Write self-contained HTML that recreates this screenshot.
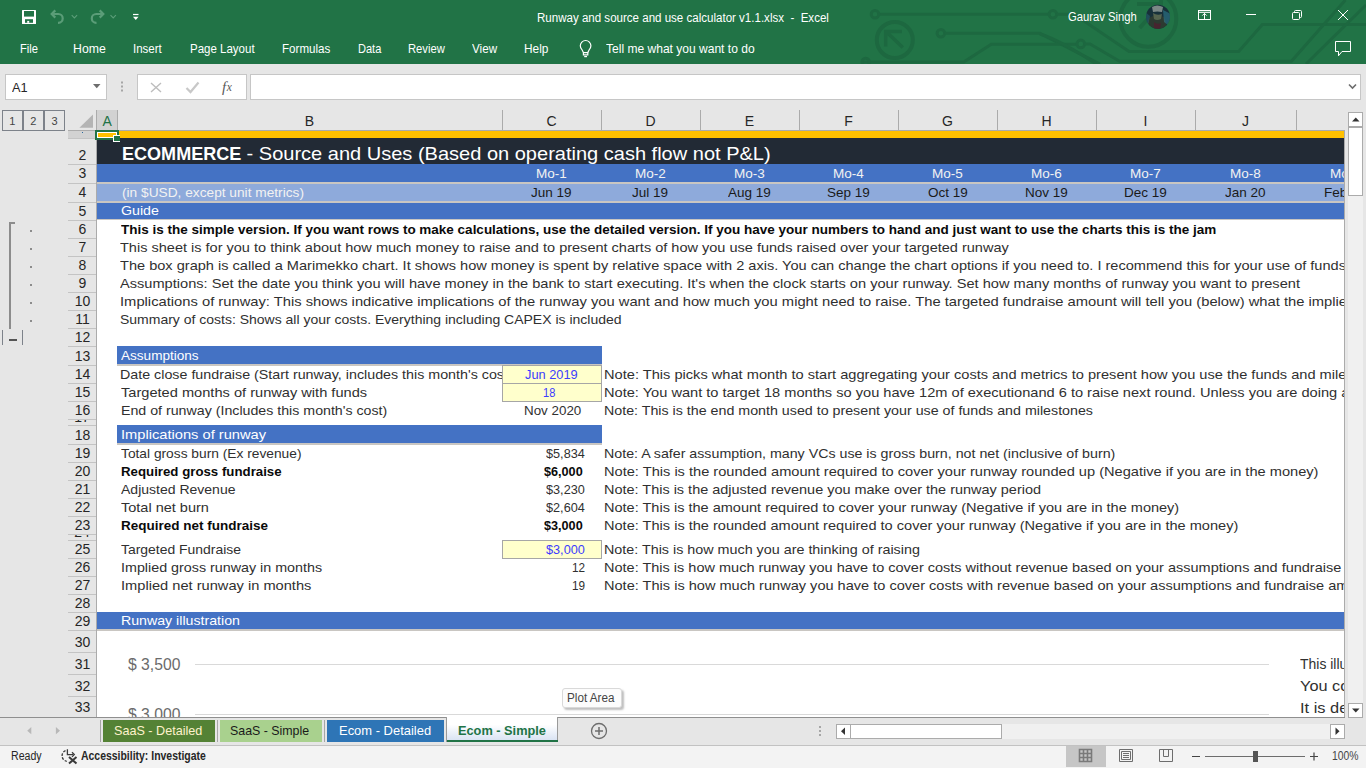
<!DOCTYPE html>
<html><head><meta charset="utf-8"><title>Excel</title>
<style>
html,body{margin:0;padding:0;}
body{width:1366px;height:768px;position:relative;overflow:hidden;background:#e6e6e6;font-family:'Liberation Sans', sans-serif;}
.r{position:absolute;}
.t{position:absolute;white-space:pre;transform-origin:0 0;}
.u{position:absolute;white-space:pre;font-family:'Liberation Sans', sans-serif;}
</style></head><body>
<div class="r" style="left:0;top:0;width:1366px;height:64px;background:#217346"></div>
<svg class="r" style="left:0;top:0" width="1366" height="64" viewBox="0 0 1366 64">
<g fill="none" stroke="#1d6840" stroke-width="3" stroke-linecap="butt">
<path d="M879 14.3 H1049"/>
<circle cx="875" cy="14.3" r="3.8"/>
<circle cx="1052.9" cy="14.3" r="3.8"/>
<path d="M1056.7 14.3 H1074 L1129 51.4 H1238.7 L1262.4 24.6 H1366"/>
<circle cx="894.8" cy="40" r="18" stroke-width="4"/>
<path d="M902.8 47.6 L886.5 31.9 M885.7 46.6 V31.4 H901.9" stroke-width="3.5"/>
<circle cx="940.9" cy="33.3" r="3.8"/>
<path d="M944.7 33.3 H1039.8 L1100 64"/>
<path d="M862 62 H963.7 L991.3 44.2 H1077"/>
<circle cx="1080.8" cy="43.9" r="3.8"/>
<path d="M1084.6 43.9 H1090 L1119.6 61.3 H1291.4 L1345.4 0"/>
<path d="M1306 64 L1366 5"/>
<circle cx="865.7" cy="62" r="3.8"/>
<path d="M1040 34 Q1060 40 1096 64"/>
<circle cx="1148.3" cy="18.7" r="28" stroke-width="4"/>
<path d="M1139.6 28 L1159.5 5.9 M1137 4 H1161 V-20" stroke-width="4"/>
</g>
<!-- save icon -->
<rect x="22" y="10" width="14" height="14" fill="#fff" rx="0.5"/>
<rect x="24" y="11" width="10" height="5.6" fill="#217346"/>
<rect x="25" y="19.2" width="8" height="3.6" fill="#217346"/>
<rect x="27.2" y="20.9" width="2" height="1.9" fill="#fff"/>
<!-- undo / redo -->
<g fill="none" stroke="#5b9d78" stroke-width="2.2">
<path d="M51.5 14 H58.3 A4.4 4.4 0 0 1 58.3 22.8 H58"/>
<path d="M55.3 10.4 L51.7 14 L55.3 17.6"/>
<path d="M103.5 14 H96.2 A4.4 4.4 0 0 0 96.2 22.8 H96.5"/>
<path d="M99.7 10.4 L103.3 14 L99.7 17.6"/>
</g>
<g fill="none" stroke="#5b9d78" stroke-width="1.1">
<path d="M71.7 15.2 L74.4 17.9 L77.1 15.2"/>
<path d="M110.5 15.2 L113.2 17.9 L115.9 15.2"/>
</g>
<!-- customize qat -->
<rect x="133" y="13.9" width="5.5" height="1.2" fill="#fff"/>
<path d="M133 16.8 H138.5 L135.75 20.1 Z" fill="#fff"/>
<!-- avatar -->
<defs><clipPath id="avc"><circle cx="1158" cy="16.7" r="12"/></clipPath></defs>
<circle cx="1158" cy="16.7" r="12" fill="#17303a"/>
<g clip-path="url(#avc)">
<path d="M1146 30 L1149 18 Q1156 13 1164 17 L1168 30 Z" fill="#2c3a31"/>
<path d="M1152 7 Q1157 4 1163 7 L1162 12 Q1157 11 1153 12 Z" fill="#8d9894" opacity="0.85"/>
<path d="M1153 13 Q1157 16 1162 14 L1161 19 Q1157 21 1154 19 Z" fill="#56644f"/>
<path d="M1163 10 L1171 14 L1169 26 L1164 22 Z" fill="#3aa0b8" opacity="0.4"/>
<path d="M1145 12 L1150 16 L1148 26 L1144 22 Z" fill="#3aa0b8" opacity="0.25"/>
<path d="M1154 22 Q1157 25 1161 23 L1160 29 L1154 29 Z" fill="#4a2230" opacity="0.9"/>
</g>
<!-- ribbon display options -->
<g fill="none" stroke="#fff" stroke-width="1">
<rect x="1198.5" y="10.5" width="12" height="9"/>
<path d="M1198.5 12.3 H1210.5" stroke-width="1.1"/>
<path d="M1204.5 19 V13.2 M1202.3 15.6 L1204.5 13.4 L1206.7 15.6"/>
<path d="M1246 14.5 H1256"/>
<rect x="1292.5" y="12.5" width="7" height="7" rx="1"/>
<path d="M1294.5 12.5 V11.5 Q1294.5 10.5 1295.5 10.5 H1300.5 Q1301.5 10.5 1301.5 11.5 V16.5 Q1301.5 17.5 1300.5 17.5 H1299.5"/>
<path d="M1338 10 L1348 20 M1348 10 L1338 20"/>
<path d="M1335.5 41.5 H1350.5 V51.5 H1342 L1338.5 55.8 V51.5 H1335.5 Z"/>
</g>
<!-- lightbulb -->
<g fill="none" stroke="#fff" stroke-width="1.2">
<path d="M583.4 52.6 L581.9 49.6 A5.3 5.3 0 1 1 589.3 49.6 L587.8 52.6 Z"/>
<path d="M583.4 52.6 V54.9 H587.8 V52.6"/>
<path d="M584.2 56.6 H587"/>
</g>
</svg>
<div class="r" style="left:5px;top:74px;width:102px;height:26px;box-sizing:border-box;border:1px solid #c6c6c6;background:#fff"></div>
<div class="r" style="left:137px;top:74px;width:110px;height:26px;box-sizing:border-box;border:1px solid #c6c6c6;background:#fff"></div>
<div class="r" style="left:250px;top:74px;width:1111px;height:26px;box-sizing:border-box;border:1px solid #c6c6c6;background:#fff"></div>
<svg class="r" style="left:0;top:64px" width="1366" height="46" viewBox="0 64 1366 46">
<path d="M93 84 H100.5 L96.75 88.2 Z" fill="#6d6d6d"/>
<rect x="121" y="81.5" width="2" height="2" fill="#a6a6a6"/>
<rect x="121" y="85.5" width="2" height="2" fill="#a6a6a6"/>
<rect x="121" y="89.5" width="2" height="2" fill="#a6a6a6"/>
<path d="M151 83 L161 92 M161 83 L151 92" stroke="#bdbdbd" stroke-width="1.4" fill="none"/>
<path d="M186.5 88 L190.5 92 L198.5 82.5" stroke="#c8c8c8" stroke-width="2.2" fill="none"/>
<text x="222" y="91.5" font-family="Liberation Serif" font-style="italic" font-size="15" fill="#5a5a5a">f</text>
<text x="226.8" y="90.5" font-family="Liberation Serif" font-style="italic" font-size="11.5" fill="#5a5a5a">x</text>
<path d="M1349 84.5 L1352.5 88 L1356 84.5" stroke="#6d6d6d" stroke-width="1.6" fill="none"/>
</svg>
<div class="r" style="left:2px;top:110px;width:21px;height:21px;box-sizing:border-box;border:1px solid #7d828a"></div>
<div class="r" style="left:23px;top:110px;width:21px;height:21px;box-sizing:border-box;border:1px solid #7d828a"></div>
<div class="r" style="left:44px;top:110px;width:21px;height:21px;box-sizing:border-box;border:1px solid #7d828a"></div>
<svg class="r" style="left:0;top:0" width="97" height="140"><path d="M93 114.6 V127.8 H79.4 Z" fill="#b4b4b4"/></svg>
<div class="r" style="left:97px;top:110px;width:1247px;height:20px;background:#e6e6e6"></div>
<div class="r" style="left:96px;top:110px;width:22px;height:20px;background:#d2d2d2"></div>
<div class="r" style="left:68px;top:130px;width:1276px;height:1px;background:#ababab"></div>
<div class="r" style="left:96px;top:110px;width:1px;height:20px;background:#ababab"></div>
<div class="r" style="left:117px;top:110px;width:1px;height:20px;background:#ababab"></div>
<div class="r" style="left:502px;top:110px;width:1px;height:20px;background:#ababab"></div>
<div class="r" style="left:601px;top:110px;width:1px;height:20px;background:#ababab"></div>
<div class="r" style="left:700px;top:110px;width:1px;height:20px;background:#ababab"></div>
<div class="r" style="left:799px;top:110px;width:1px;height:20px;background:#ababab"></div>
<div class="r" style="left:898px;top:110px;width:1px;height:20px;background:#ababab"></div>
<div class="r" style="left:997px;top:110px;width:1px;height:20px;background:#ababab"></div>
<div class="r" style="left:1096px;top:110px;width:1px;height:20px;background:#ababab"></div>
<div class="r" style="left:1195px;top:110px;width:1px;height:20px;background:#ababab"></div>
<div class="r" style="left:1296px;top:110px;width:1px;height:20px;background:#ababab"></div>
<div class="r" style="left:96px;top:130px;width:1px;height:587px;background:#ababab"></div>
<div class="r" style="left:68px;top:131px;width:28px;height:7px;background:#d2d2d2"></div>
<div class="r" style="left:81.5px;top:132px;width:1.2px;height:1px;background:#2a6aa0"></div>
<div class="r" style="left:68px;top:138px;width:28px;height:1px;background:#c4c4c4"></div>
<div class="r" style="left:68px;top:164px;width:28px;height:1px;background:#c4c4c4"></div>
<div class="r" style="left:68px;top:183px;width:28px;height:1px;background:#c4c4c4"></div>
<div class="r" style="left:68px;top:202px;width:28px;height:1px;background:#c4c4c4"></div>
<div class="r" style="left:68px;top:220px;width:28px;height:1px;background:#c4c4c4"></div>
<div class="r" style="left:68px;top:238px;width:28px;height:1px;background:#c4c4c4"></div>
<div class="r" style="left:68px;top:256px;width:28px;height:1px;background:#c4c4c4"></div>
<div class="r" style="left:68px;top:274px;width:28px;height:1px;background:#c4c4c4"></div>
<div class="r" style="left:68px;top:292px;width:28px;height:1px;background:#c4c4c4"></div>
<div class="r" style="left:68px;top:310px;width:28px;height:1px;background:#c4c4c4"></div>
<div class="r" style="left:68px;top:328px;width:28px;height:1px;background:#c4c4c4"></div>
<div class="r" style="left:68px;top:346px;width:28px;height:1px;background:#c4c4c4"></div>
<div class="r" style="left:68px;top:365px;width:28px;height:1px;background:#c4c4c4"></div>
<div class="r" style="left:68px;top:383px;width:28px;height:1px;background:#c4c4c4"></div>
<div class="r" style="left:68px;top:401px;width:28px;height:1px;background:#c4c4c4"></div>
<div class="r" style="left:68px;top:419px;width:28px;height:1px;background:#c4c4c4"></div>
<div class="r" style="left:68px;top:425px;width:28px;height:1px;background:#c4c4c4"></div>
<div class="r" style="left:68px;top:444px;width:28px;height:1px;background:#c4c4c4"></div>
<div class="r" style="left:68px;top:462px;width:28px;height:1px;background:#c4c4c4"></div>
<div class="r" style="left:68px;top:480px;width:28px;height:1px;background:#c4c4c4"></div>
<div class="r" style="left:68px;top:498px;width:28px;height:1px;background:#c4c4c4"></div>
<div class="r" style="left:68px;top:516px;width:28px;height:1px;background:#c4c4c4"></div>
<div class="r" style="left:68px;top:534px;width:28px;height:1px;background:#c4c4c4"></div>
<div class="r" style="left:68px;top:540px;width:28px;height:1px;background:#c4c4c4"></div>
<div class="r" style="left:68px;top:558px;width:28px;height:1px;background:#c4c4c4"></div>
<div class="r" style="left:68px;top:576px;width:28px;height:1px;background:#c4c4c4"></div>
<div class="r" style="left:68px;top:594px;width:28px;height:1px;background:#c4c4c4"></div>
<div class="r" style="left:68px;top:612px;width:28px;height:1px;background:#c4c4c4"></div>
<div class="r" style="left:68px;top:630px;width:28px;height:1px;background:#c4c4c4"></div>
<div class="r" style="left:68px;top:652px;width:28px;height:1px;background:#c4c4c4"></div>
<div class="r" style="left:68px;top:674px;width:28px;height:1px;background:#c4c4c4"></div>
<div class="r" style="left:68px;top:696px;width:28px;height:1px;background:#c4c4c4"></div>
<div class="r" style="left:9px;top:222px;width:2px;height:107px;background:#8c8c8c"></div>
<div class="r" style="left:9px;top:222px;width:6px;height:2px;background:#8c8c8c"></div>
<div class="r" style="left:30px;top:229.5px;width:2px;height:2px;background:#8c8c8c"></div>
<div class="r" style="left:30px;top:247.5px;width:2px;height:2px;background:#8c8c8c"></div>
<div class="r" style="left:30px;top:265.5px;width:2px;height:2px;background:#8c8c8c"></div>
<div class="r" style="left:30px;top:283.5px;width:2px;height:2px;background:#8c8c8c"></div>
<div class="r" style="left:30px;top:301.5px;width:2px;height:2px;background:#8c8c8c"></div>
<div class="r" style="left:30px;top:319.5px;width:2px;height:2px;background:#8c8c8c"></div>
<div class="r" style="left:2px;top:330px;width:1px;height:15px;background:#7d828a"></div>
<div class="r" style="left:22px;top:330px;width:1px;height:15px;background:#7d828a"></div>
<div class="r" style="left:9px;top:339px;width:8px;height:2px;background:#555"></div>
<div class="r" style="left:68px;top:420px;width:28px;height:5px;overflow:hidden"><div class="u" style="left:0;top:-10px;width:28px;text-align:center;font-size:14px;line-height:14px;color:#262626">17</div></div>
<div class="r" style="left:68px;top:535px;width:28px;height:5px;overflow:hidden"><div class="u" style="left:0;top:-10px;width:28px;text-align:center;font-size:14px;line-height:14px;color:#262626">24</div></div>
<div class="r" style="left:0;top:0;width:1344px;height:717px;overflow:hidden">
<div class="r" style="left:0;top:131px;width:1344px;height:586px;overflow:hidden"><div class="r" style="left:0;top:-131px;width:1344px;height:768px">
<div class="r" style="left:97px;top:131px;width:1247px;height:586px;background:#ffffff;"></div>
<div class="r" style="left:97px;top:131px;width:1247px;height:7px;background:#ffc000;"></div>
<div class="r" style="left:97px;top:138px;width:1247px;height:26px;background:#222a35;"></div>
<div class="r" style="left:97px;top:164px;width:1247px;height:18px;background:#4472c4;"></div>
<div class="r" style="left:97px;top:182px;width:1247px;height:2px;background:#c9c6c2;"></div>
<div class="r" style="left:97px;top:184px;width:1247px;height:17px;background:#8eaadb;"></div>
<div class="r" style="left:97px;top:201px;width:1247px;height:2px;background:#c9c6c2;"></div>
<div class="r" style="left:97px;top:203px;width:1247px;height:16px;background:#4472c4;"></div>
<div class="r" style="left:97px;top:219px;width:1247px;height:1px;background:#c9c6c2;"></div>
<div class="r" style="left:117px;top:346px;width:485px;height:18px;background:#4472c4;"></div>
<div class="r" style="left:117px;top:364px;width:485px;height:2px;background:#c9c6c2;"></div>
<div class="r" style="left:117px;top:425px;width:485px;height:18px;background:#4472c4;"></div>
<div class="r" style="left:117px;top:443px;width:485px;height:2px;background:#c9c6c2;"></div>
<div class="r" style="left:97px;top:612px;width:1247px;height:17px;background:#4472c4;"></div>
<div class="r" style="left:97px;top:629px;width:1247px;height:2px;background:#c9c6c2;"></div>
<div class="r" style="left:502px;top:365px;width:100px;height:37px;background:#ffffcc;box-sizing:border-box;border:1px solid #a6a6a6"></div>
<div class="r" style="left:502px;top:383px;width:100px;height:1px;background:#a6a6a6;"></div>
<div class="r" style="left:502px;top:540px;width:100px;height:19px;background:#ffffcc;box-sizing:border-box;border:1px solid #a6a6a6"></div>
<div class="r" style="left:195px;top:664px;width:1074px;height:1px;background:#d9d9d9;"></div>
<div class="r" style="left:195px;top:714px;width:1074px;height:1px;background:#d9d9d9;"></div>
<div class="t" style="left:122.00px;top:143.92px;font-size:19px;line-height:19px;font-weight:bold;color:#ffffff;transform:scaleX(0.9497)">ECOMMERCE</div>
<div class="t" style="left:241.30px;top:143.92px;font-size:19px;line-height:19px;font-weight:normal;color:#ffffff;transform:scaleX(1.0536)"> - Source and Uses (Based on operating cash flow not P&amp;L)</div>
<div class="t" style="left:536.10px;top:167.00px;font-size:13px;line-height:13px;font-weight:normal;color:#f2f2f2;transform:scaleX(1.0400)">Mo-1</div>
<div class="t" style="left:531.20px;top:186.00px;font-size:13px;line-height:13px;font-weight:normal;color:#1a1a1a;transform:scaleX(1.0400)">Jun 19</div>
<div class="t" style="left:635.10px;top:167.00px;font-size:13px;line-height:13px;font-weight:normal;color:#f2f2f2;transform:scaleX(1.0400)">Mo-2</div>
<div class="t" style="left:632.45px;top:186.00px;font-size:13px;line-height:13px;font-weight:normal;color:#1a1a1a;transform:scaleX(1.0400)">Jul 19</div>
<div class="t" style="left:734.10px;top:167.00px;font-size:13px;line-height:13px;font-weight:normal;color:#f2f2f2;transform:scaleX(1.0400)">Mo-3</div>
<div class="t" style="left:728.07px;top:186.00px;font-size:13px;line-height:13px;font-weight:normal;color:#1a1a1a;transform:scaleX(1.0400)">Aug 19</div>
<div class="t" style="left:833.10px;top:167.00px;font-size:13px;line-height:13px;font-weight:normal;color:#f2f2f2;transform:scaleX(1.0400)">Mo-4</div>
<div class="t" style="left:827.07px;top:186.00px;font-size:13px;line-height:13px;font-weight:normal;color:#1a1a1a;transform:scaleX(1.0400)">Sep 19</div>
<div class="t" style="left:932.10px;top:167.00px;font-size:13px;line-height:13px;font-weight:normal;color:#f2f2f2;transform:scaleX(1.0400)">Mo-5</div>
<div class="t" style="left:927.59px;top:186.00px;font-size:13px;line-height:13px;font-weight:normal;color:#1a1a1a;transform:scaleX(1.0400)">Oct 19</div>
<div class="t" style="left:1031.10px;top:167.00px;font-size:13px;line-height:13px;font-weight:normal;color:#f2f2f2;transform:scaleX(1.0400)">Mo-6</div>
<div class="t" style="left:1025.07px;top:186.00px;font-size:13px;line-height:13px;font-weight:normal;color:#1a1a1a;transform:scaleX(1.0400)">Nov 19</div>
<div class="t" style="left:1130.10px;top:167.00px;font-size:13px;line-height:13px;font-weight:normal;color:#f2f2f2;transform:scaleX(1.0400)">Mo-7</div>
<div class="t" style="left:1124.07px;top:186.00px;font-size:13px;line-height:13px;font-weight:normal;color:#1a1a1a;transform:scaleX(1.0400)">Dec 19</div>
<div class="t" style="left:1230.10px;top:167.00px;font-size:13px;line-height:13px;font-weight:normal;color:#f2f2f2;transform:scaleX(1.0400)">Mo-8</div>
<div class="t" style="left:1225.20px;top:186.00px;font-size:13px;line-height:13px;font-weight:normal;color:#1a1a1a;transform:scaleX(1.0400)">Jan 20</div>
<div class="t" style="left:1330.10px;top:167.00px;font-size:13px;line-height:13px;font-weight:normal;color:#f2f2f2;transform:scaleX(1.0400)">Mo-9</div>
<div class="t" style="left:1324.45px;top:186.00px;font-size:13px;line-height:13px;font-weight:normal;color:#1a1a1a;transform:scaleX(1.0400)">Feb 20</div>
<div class="t" style="left:122.00px;top:186.00px;font-size:13px;line-height:13px;font-weight:normal;color:#f2f2f2;transform:scaleX(1.0540)">(in $USD, except unit metrics)</div>
<div class="t" style="left:120.80px;top:203.50px;font-size:13px;line-height:13px;font-weight:normal;color:#ffffff;transform:scaleX(1.0921)">Guide</div>
<div class="t" style="left:120.50px;top:223.00px;font-size:13px;line-height:13px;font-weight:bold;color:#0a0a0a;transform:scaleX(1.0378)">This is the simple version. If you want rows to make calculations, use the detailed version. If you have your numbers to hand and just want to use the charts this is the jam</div>
<div class="t" style="left:120.00px;top:241.00px;font-size:13px;line-height:13px;font-weight:normal;color:#303030;transform:scaleX(1.1171)">This sheet is for you to think about how much money to raise and to present charts of how you use funds raised over your targeted runway</div>
<div class="t" style="left:120.00px;top:259.00px;font-size:13px;line-height:13px;font-weight:normal;color:#303030;transform:scaleX(1.1206)">The box graph is called a Marimekko chart. It shows how money is spent by relative space with 2 axis. You can change the chart options if you need to. I recommend this for your use of funds</div>
<div class="t" style="left:120.00px;top:277.00px;font-size:13px;line-height:13px;font-weight:normal;color:#303030;transform:scaleX(1.1230)">Assumptions: Set the date you think you will have money in the bank to start executing. It&#x27;s when the clock starts on your runway. Set how many months of runway you want to present</div>
<div class="t" style="left:120.00px;top:295.00px;font-size:13px;line-height:13px;font-weight:normal;color:#303030;transform:scaleX(1.1341)">Implications of runway: This shows indicative implications of the runway you want and how much you might need to raise. The targeted fundraise amount will tell you (below) what the implie</div>
<div class="t" style="left:120.00px;top:313.00px;font-size:13px;line-height:13px;font-weight:normal;color:#303030;transform:scaleX(1.0761)">Summary of costs: Shows all your costs. Everything including CAPEX is included</div>
<div class="t" style="left:121.20px;top:348.50px;font-size:13px;line-height:13px;font-weight:normal;color:#ffffff;transform:scaleX(1.0427)">Assumptions</div>
<div style="position:absolute;left:0;top:0;width:502px;height:768px;overflow:hidden"><div class="t" style="left:120.00px;top:368.00px;font-size:13px;line-height:13px;font-weight:normal;color:#303030;transform:scaleX(1.0978)">Date close fundraise (Start runway, includes this month&#x27;s cos</div></div>
<div class="t" style="left:525.15px;top:368.00px;font-size:13px;line-height:13px;font-weight:normal;color:#3c3cff;transform:scaleX(0.9850)">Jun 2019</div>
<div class="t" style="left:603.60px;top:368.00px;font-size:13px;line-height:13px;font-weight:normal;color:#303030;transform:scaleX(1.1245)">Note: This picks what month to start aggregating your costs and metrics to present how you use the funds and mile</div>
<div class="t" style="left:120.70px;top:386.00px;font-size:13px;line-height:13px;font-weight:normal;color:#303030;transform:scaleX(1.1240)">Targeted months of runway with funds</div>
<div class="t" style="left:542.85px;top:386.00px;font-size:13px;line-height:13px;font-weight:normal;color:#3c3cff;transform:scaleX(0.8501)">18</div>
<div class="t" style="left:603.60px;top:386.00px;font-size:13px;line-height:13px;font-weight:normal;color:#303030;transform:scaleX(1.1235)">Note: You want to target 18 months so you have 12m of executionand 6 to raise next round. Unless you are doing a</div>
<div class="t" style="left:120.70px;top:404.00px;font-size:13px;line-height:13px;font-weight:normal;color:#303030;transform:scaleX(1.0922)">End of runway (Includes this month&#x27;s cost)</div>
<div class="t" style="left:523.95px;top:404.00px;font-size:13px;line-height:13px;font-weight:normal;color:#303030;transform:scaleX(1.0295)">Nov 2020</div>
<div class="t" style="left:603.60px;top:404.00px;font-size:13px;line-height:13px;font-weight:normal;color:#303030;transform:scaleX(1.0955)">Note: This is the end month used to present your use of funds and milestones</div>
<div class="t" style="left:120.70px;top:427.50px;font-size:13px;line-height:13px;font-weight:normal;color:#ffffff;transform:scaleX(1.1281)">Implications of runway</div>
<div class="t" style="left:120.70px;top:447.00px;font-size:13px;line-height:13px;font-weight:normal;color:#303030;transform:scaleX(1.0585)">Total gross burn (Ex revenue)</div>
<div class="t" style="left:546.20px;top:447.00px;font-size:13px;line-height:13px;font-weight:normal;color:#303030;transform:scaleX(0.9757)">$5,834</div>
<div class="t" style="left:603.60px;top:447.00px;font-size:13px;line-height:13px;font-weight:normal;color:#303030;transform:scaleX(1.0937)">Note: A safer assumption, many VCs use is gross burn, not net (inclusive of burn)</div>
<div class="t" style="left:120.70px;top:465.00px;font-size:13px;line-height:13px;font-weight:bold;color:#0a0a0a;transform:scaleX(1.0198)">Required gross fundraise</div>
<div class="t" style="left:544.30px;top:465.00px;font-size:13px;line-height:13px;font-weight:bold;color:#0a0a0a;transform:scaleX(0.9732)">$6,000</div>
<div class="t" style="left:603.60px;top:465.00px;font-size:13px;line-height:13px;font-weight:normal;color:#303030;transform:scaleX(1.1239)">Note: This is the rounded amount required to cover your runway rounded up (Negative if you are in the money)</div>
<div class="t" style="left:120.70px;top:483.00px;font-size:13px;line-height:13px;font-weight:normal;color:#303030;transform:scaleX(1.0776)">Adjusted Revenue</div>
<div class="t" style="left:546.20px;top:483.00px;font-size:13px;line-height:13px;font-weight:normal;color:#303030;transform:scaleX(0.9757)">$3,230</div>
<div class="t" style="left:603.60px;top:483.00px;font-size:13px;line-height:13px;font-weight:normal;color:#303030;transform:scaleX(1.1123)">Note: This is the adjusted revenue you make over the runway period</div>
<div class="t" style="left:120.70px;top:501.00px;font-size:13px;line-height:13px;font-weight:normal;color:#303030;transform:scaleX(1.1157)">Total net burn</div>
<div class="t" style="left:546.20px;top:501.00px;font-size:13px;line-height:13px;font-weight:normal;color:#303030;transform:scaleX(0.9757)">$2,604</div>
<div class="t" style="left:603.60px;top:501.00px;font-size:13px;line-height:13px;font-weight:normal;color:#303030;transform:scaleX(1.1170)">Note: This is the amount required to cover your runway (Negative if you are in the money)</div>
<div class="t" style="left:120.70px;top:519.00px;font-size:13px;line-height:13px;font-weight:bold;color:#0a0a0a;transform:scaleX(1.0376)">Required net fundraise</div>
<div class="t" style="left:544.30px;top:519.00px;font-size:13px;line-height:13px;font-weight:bold;color:#0a0a0a;transform:scaleX(0.9732)">$3,000</div>
<div class="t" style="left:603.60px;top:519.00px;font-size:13px;line-height:13px;font-weight:normal;color:#303030;transform:scaleX(1.1201)">Note: This is the rounded amount required to cover your runway (Negative if you are in the money)</div>
<div class="t" style="left:120.70px;top:543.00px;font-size:13px;line-height:13px;font-weight:normal;color:#303030;transform:scaleX(1.0713)">Targeted Fundraise</div>
<div class="t" style="left:546.20px;top:543.00px;font-size:13px;line-height:13px;font-weight:normal;color:#3c3cff;transform:scaleX(0.9757)">$3,000</div>
<div class="t" style="left:603.60px;top:543.00px;font-size:13px;line-height:13px;font-weight:normal;color:#303030;transform:scaleX(1.1021)">Note: This is how much you are thinking of raising</div>
<div class="t" style="left:120.70px;top:561.00px;font-size:13px;line-height:13px;font-weight:normal;color:#303030;transform:scaleX(1.1000)">Implied gross runway in months</div>
<div class="t" style="left:571.90px;top:561.00px;font-size:13px;line-height:13px;font-weight:normal;color:#303030;transform:scaleX(0.9054)">12</div>
<div class="t" style="left:603.60px;top:561.00px;font-size:13px;line-height:13px;font-weight:normal;color:#303030;transform:scaleX(1.1155)">Note: This is how much runway you have to cover costs without revenue based on your assumptions and fundraise</div>
<div class="t" style="left:120.70px;top:579.00px;font-size:13px;line-height:13px;font-weight:normal;color:#303030;transform:scaleX(1.1260)">Implied net runway in months</div>
<div class="t" style="left:571.90px;top:579.00px;font-size:13px;line-height:13px;font-weight:normal;color:#303030;transform:scaleX(0.9054)">19</div>
<div class="t" style="left:603.60px;top:579.00px;font-size:13px;line-height:13px;font-weight:normal;color:#303030;transform:scaleX(1.1201)">Note: This is how much runway you have to cover costs with revenue based on your assumptions and fundraise am</div>
<div class="t" style="left:120.80px;top:613.70px;font-size:13px;line-height:13px;font-weight:normal;color:#ffffff;transform:scaleX(1.0897)">Runway illustration</div>
<div class="t" style="left:127.80px;top:655.61px;font-size:17px;line-height:17px;font-weight:normal;color:#6b6b6b;transform:scaleX(0.9236)">$ 3,500</div>
<div class="t" style="left:127.80px;top:705.61px;font-size:17px;line-height:17px;font-weight:normal;color:#6b6b6b;transform:scaleX(0.9236)">$ 3,000</div>
<div class="t" style="left:1299.70px;top:655.90px;font-size:15px;line-height:15px;font-weight:normal;color:#303030;transform:scaleX(0.9300)">This illu</div>
<div class="t" style="left:1299.70px;top:677.80px;font-size:15px;line-height:15px;font-weight:normal;color:#303030;transform:scaleX(1.0876)">You co</div>
<div class="t" style="left:1299.70px;top:699.70px;font-size:15px;line-height:15px;font-weight:normal;color:#303030;transform:scaleX(1.0931)">It is de</div>
</div></div></div>
<div class="r" style="left:0;top:717px;width:1366px;height:28px;background:#e6e6e6"></div>
<div class="r" style="left:0;top:717px;width:1345px;height:1px;background:#8f8f8f"></div>
<div class="r" style="left:0;top:745px;width:1366px;height:23px;background:#f3f3f3"></div>
<div class="r" style="left:0;top:745px;width:1366px;height:1px;background:#c2c2c2"></div>
<!-- selection A1 -->
<div class="r" style="left:95px;top:130px;width:24px;height:10px;box-sizing:border-box;border:2px solid #217346"></div>
<div class="r" style="left:97px;top:132px;width:20px;height:6px;box-sizing:border-box;border:1px solid #fff"></div>
<div class="r" style="left:113px;top:134.5px;width:7px;height:7px;background:#fff"></div>
<div class="r" style="left:114px;top:135.5px;width:5.5px;height:5.5px;background:#217346"></div>
<!-- v scrollbar -->
<div class="r" style="left:1348px;top:196px;width:15px;height:507px;background:#f0f0f0"></div>
<div class="r" style="left:1344px;top:130px;width:1px;height:587px;background:#ababab"></div>
<div class="r" style="left:1348px;top:112px;width:15px;height:15px;box-sizing:border-box;border:1px solid #ababab;background:#fff"></div>
<div class="r" style="left:1348px;top:127px;width:15px;height:69px;box-sizing:border-box;border:1px solid #ababab;background:#fff"></div>
<div class="r" style="left:1348px;top:703px;width:15px;height:15px;box-sizing:border-box;border:1px solid #ababab;background:#fff"></div>
<svg class="r" style="left:1340px;top:100px" width="26" height="620" viewBox="1340 100 26 620">
<path d="M1352 121.5 H1359.5 L1355.75 117.5 Z" fill="#333"/>
<path d="M1352 708.5 H1359.5 L1355.75 712.5 Z" fill="#333"/>
</svg>
<!-- tabs -->
<svg class="r" style="left:0;top:717px" width="110" height="28" viewBox="0 717 110 28">
<path d="M31.3 727 V734.3 L27.2 730.65 Z" fill="#b8b8b8"/>
<path d="M55.9 727 V734.3 L60 730.65 Z" fill="#b8b8b8"/>
</svg>
<div class="r" style="left:100px;top:720px;width:1px;height:22px;background:#a6a6a6"></div>
<div class="r" style="left:103px;top:720px;width:112px;height:22px;background:#548235"></div>
<div class="r" style="left:217px;top:720px;width:1px;height:22px;background:#a6a6a6"></div>
<div class="r" style="left:220px;top:720px;width:102px;height:22px;background:#a9d18e"></div>
<div class="r" style="left:324px;top:720px;width:1px;height:22px;background:#a6a6a6"></div>
<div class="r" style="left:327px;top:720px;width:117px;height:22px;background:#2e75b6"></div>
<div class="r" style="left:446px;top:717px;width:112px;height:25px;box-sizing:border-box;border-left:1px solid #9a9a9a;border-right:1px solid #9a9a9a;background:linear-gradient(#ffffff,#ffffff 30%,#d5e0f2)"></div>
<div class="r" style="left:447px;top:740px;width:111px;height:2px;background:#217346"></div>
<svg class="r" style="left:580px;top:717px" width="40" height="28" viewBox="580 717 40 28">
<circle cx="599" cy="731" r="7.5" fill="none" stroke="#6d6d6d" stroke-width="1.3"/>
<path d="M599 727 V735 M595 731 H603" stroke="#6d6d6d" stroke-width="1.5"/>
</svg>
<svg class="r" style="left:810px;top:717px" width="20" height="28" viewBox="810 717 20 28">
<rect x="819" y="726" width="2" height="2" fill="#a6a6a6"/>
<rect x="819" y="730" width="2" height="2" fill="#a6a6a6"/>
<rect x="819" y="734" width="2" height="2" fill="#a6a6a6"/>
</svg>
<!-- h scrollbar -->
<div class="r" style="left:836px;top:724px;width:509px;height:15px;background:#f0f0f0"></div>
<div class="r" style="left:836px;top:724px;width:15px;height:15px;box-sizing:border-box;border:1px solid #ababab;background:#fff"></div>
<div class="r" style="left:850px;top:724px;width:152px;height:15px;box-sizing:border-box;border:1px solid #ababab;background:#fff"></div>
<div class="r" style="left:1330px;top:724px;width:15px;height:15px;box-sizing:border-box;border:1px solid #ababab;background:#fff"></div>
<svg class="r" style="left:830px;top:717px" width="536" height="28" viewBox="830 717 536 28">
<path d="M845 727.5 V735 L841 731.25 Z" fill="#333"/>
<path d="M1335.5 727.5 V735 L1339.5 731.25 Z" fill="#333"/>
</svg>
<!-- tooltip -->
<div class="r" style="left:562px;top:688px;width:60px;height:20px;box-sizing:border-box;border:1px solid #d9d9d9;border-radius:3px;background:#fcfcfc;box-shadow:2px 2px 2px rgba(0,0,0,0.25)"></div>
<!-- status bar right -->
<div class="r" style="left:1066px;top:746px;width:40px;height:21px;background:#c6c6c6"></div>
<svg class="r" style="left:1060px;top:745px" width="306" height="23" viewBox="1060 745 306 23">
<g fill="none" stroke="#6d6d6d" stroke-width="1">
<path d="M1079.5 749.5 H1091.5 V761.5 H1079.5 Z M1083.5 749.5 V761.5 M1087.5 749.5 V761.5 M1079.5 753.5 H1091.5 M1079.5 757.5 H1091.5" stroke="#7a7a7a" stroke-width="1.6"/>
<path d="M1119.5 749.5 H1132.5 V761.5 H1119.5 Z M1121.5 751.5 H1130.5 V759.5 H1121.5 Z M1123 753.5 H1129 M1123 755.5 H1129 M1123 757.5 H1129"/>
<path d="M1159.5 761.5 V749.5 H1172.5 V761.5 Z M1163.5 749.5 V756.5 H1168.5 V749.5"/>
<path d="M1192 756.5 H1200 M1310 756.5 H1318 M1314 752.5 V760.5" stroke="#444" stroke-width="1.2"/>
<path d="M1205 756.5 H1305"/>
</g>
<rect x="1253" y="751" width="5" height="11" fill="#555"/>
</svg>
<!-- accessibility icon -->
<svg class="r" style="left:58px;top:747px" width="22" height="20" viewBox="58 747 22 20">
<g fill="none" stroke="#3a3a3a" stroke-width="1.3">
<path d="M65.5 750.6 A5.6 5.6 0 0 0 66.8 761.3" stroke-dasharray="2.6 1.4"/>
<path d="M67.4 749.2 V754.6 H73"/>
<path d="M72 752.3 L74.3 754.6 L72 756.9"/>
<path d="M69 757 L76.5 763.6 M76.5 757 L69 763.6" stroke-width="2"/>
</g>
</svg>
<div class="t" style="left:537.40px;top:12.04px;font-size:12px;line-height:12px;font-weight:normal;color:#ffffff;transform:scaleX(0.9618)">Runway and source and use calculator v1.1.xlsx  -  Excel</div>
<div class="t" style="left:1068.00px;top:11.34px;font-size:12px;line-height:12px;font-weight:normal;color:#ffffff;transform:scaleX(0.9361)">Gaurav Singh</div>
<div class="t" style="left:20.10px;top:42.00px;font-size:13px;line-height:13px;font-weight:normal;color:#ffffff;transform:scaleX(0.8591)">File</div>
<div class="t" style="left:73.40px;top:42.00px;font-size:13px;line-height:13px;font-weight:normal;color:#ffffff;transform:scaleX(0.9456)">Home</div>
<div class="t" style="left:133.20px;top:42.00px;font-size:13px;line-height:13px;font-weight:normal;color:#ffffff;transform:scaleX(0.8827)">Insert</div>
<div class="t" style="left:189.60px;top:42.00px;font-size:13px;line-height:13px;font-weight:normal;color:#ffffff;transform:scaleX(0.8847)">Page Layout</div>
<div class="t" style="left:281.70px;top:42.00px;font-size:13px;line-height:13px;font-weight:normal;color:#ffffff;transform:scaleX(0.8913)">Formulas</div>
<div class="t" style="left:357.50px;top:42.00px;font-size:13px;line-height:13px;font-weight:normal;color:#ffffff;transform:scaleX(0.8482)">Data</div>
<div class="t" style="left:408.40px;top:42.00px;font-size:13px;line-height:13px;font-weight:normal;color:#ffffff;transform:scaleX(0.8633)">Review</div>
<div class="t" style="left:472.10px;top:42.00px;font-size:13px;line-height:13px;font-weight:normal;color:#ffffff;transform:scaleX(0.8979)">View</div>
<div class="t" style="left:524.40px;top:42.00px;font-size:13px;line-height:13px;font-weight:normal;color:#ffffff;transform:scaleX(0.9121)">Help</div>
<div class="t" style="left:605.80px;top:42.00px;font-size:13px;line-height:13px;font-weight:normal;color:#ffffff;transform:scaleX(0.9263)">Tell me what you want to do</div>
<div class="t" style="left:12.20px;top:80.90px;font-size:13px;line-height:13px;font-weight:normal;color:#262626;transform:scaleX(0.9807)">A1</div>
<div class="t" style="left:102.53px;top:114.15px;font-size:14px;line-height:14px;font-weight:normal;color:#217346;transform:scaleX(1.0000)">A</div>
<div class="t" style="left:304.83px;top:114.15px;font-size:14px;line-height:14px;font-weight:normal;color:#262626;transform:scaleX(1.0000)">B</div>
<div class="t" style="left:546.44px;top:114.15px;font-size:14px;line-height:14px;font-weight:normal;color:#262626;transform:scaleX(1.0000)">C</div>
<div class="t" style="left:645.44px;top:114.15px;font-size:14px;line-height:14px;font-weight:normal;color:#262626;transform:scaleX(1.0000)">D</div>
<div class="t" style="left:744.83px;top:114.15px;font-size:14px;line-height:14px;font-weight:normal;color:#262626;transform:scaleX(1.0000)">E</div>
<div class="t" style="left:844.22px;top:114.15px;font-size:14px;line-height:14px;font-weight:normal;color:#262626;transform:scaleX(1.0000)">F</div>
<div class="t" style="left:942.05px;top:114.15px;font-size:14px;line-height:14px;font-weight:normal;color:#262626;transform:scaleX(1.0000)">G</div>
<div class="t" style="left:1041.44px;top:114.15px;font-size:14px;line-height:14px;font-weight:normal;color:#262626;transform:scaleX(1.0000)">H</div>
<div class="t" style="left:1143.55px;top:114.15px;font-size:14px;line-height:14px;font-weight:normal;color:#262626;transform:scaleX(1.0000)">I</div>
<div class="t" style="left:1242.00px;top:114.15px;font-size:14px;line-height:14px;font-weight:normal;color:#262626;transform:scaleX(1.0000)">J</div>
<div class="t" style="left:9.14px;top:116.29px;font-size:11px;line-height:11px;font-weight:normal;color:#444444;transform:scaleX(1.0000)">1</div>
<div class="t" style="left:30.24px;top:116.29px;font-size:11px;line-height:11px;font-weight:normal;color:#444444;transform:scaleX(1.0000)">2</div>
<div class="t" style="left:51.54px;top:116.29px;font-size:11px;line-height:11px;font-weight:normal;color:#444444;transform:scaleX(1.0000)">3</div>
<div class="t" style="left:78.60px;top:147.65px;font-size:14px;line-height:14px;font-weight:normal;color:#262626;transform:scaleX(1.0000)">2</div>
<div class="t" style="left:78.60px;top:166.15px;font-size:14px;line-height:14px;font-weight:normal;color:#262626;transform:scaleX(1.0000)">3</div>
<div class="t" style="left:78.60px;top:185.15px;font-size:14px;line-height:14px;font-weight:normal;color:#262626;transform:scaleX(1.0000)">4</div>
<div class="t" style="left:78.60px;top:204.15px;font-size:14px;line-height:14px;font-weight:normal;color:#262626;transform:scaleX(1.0000)">5</div>
<div class="t" style="left:78.60px;top:222.15px;font-size:14px;line-height:14px;font-weight:normal;color:#262626;transform:scaleX(1.0000)">6</div>
<div class="t" style="left:78.60px;top:240.15px;font-size:14px;line-height:14px;font-weight:normal;color:#262626;transform:scaleX(1.0000)">7</div>
<div class="t" style="left:78.60px;top:258.15px;font-size:14px;line-height:14px;font-weight:normal;color:#262626;transform:scaleX(1.0000)">8</div>
<div class="t" style="left:78.60px;top:276.15px;font-size:14px;line-height:14px;font-weight:normal;color:#262626;transform:scaleX(1.0000)">9</div>
<div class="t" style="left:74.71px;top:294.15px;font-size:14px;line-height:14px;font-weight:normal;color:#262626;transform:scaleX(1.0000)">10</div>
<div class="t" style="left:75.23px;top:312.15px;font-size:14px;line-height:14px;font-weight:normal;color:#262626;transform:scaleX(1.0000)">11</div>
<div class="t" style="left:74.71px;top:330.15px;font-size:14px;line-height:14px;font-weight:normal;color:#262626;transform:scaleX(1.0000)">12</div>
<div class="t" style="left:74.71px;top:349.15px;font-size:14px;line-height:14px;font-weight:normal;color:#262626;transform:scaleX(1.0000)">13</div>
<div class="t" style="left:74.71px;top:367.15px;font-size:14px;line-height:14px;font-weight:normal;color:#262626;transform:scaleX(1.0000)">14</div>
<div class="t" style="left:74.71px;top:385.15px;font-size:14px;line-height:14px;font-weight:normal;color:#262626;transform:scaleX(1.0000)">15</div>
<div class="t" style="left:74.71px;top:403.15px;font-size:14px;line-height:14px;font-weight:normal;color:#262626;transform:scaleX(1.0000)">16</div>
<div class="t" style="left:74.71px;top:428.15px;font-size:14px;line-height:14px;font-weight:normal;color:#262626;transform:scaleX(1.0000)">18</div>
<div class="t" style="left:74.71px;top:446.15px;font-size:14px;line-height:14px;font-weight:normal;color:#262626;transform:scaleX(1.0000)">19</div>
<div class="t" style="left:74.71px;top:464.15px;font-size:14px;line-height:14px;font-weight:normal;color:#262626;transform:scaleX(1.0000)">20</div>
<div class="t" style="left:74.71px;top:482.15px;font-size:14px;line-height:14px;font-weight:normal;color:#262626;transform:scaleX(1.0000)">21</div>
<div class="t" style="left:74.71px;top:500.15px;font-size:14px;line-height:14px;font-weight:normal;color:#262626;transform:scaleX(1.0000)">22</div>
<div class="t" style="left:74.71px;top:518.15px;font-size:14px;line-height:14px;font-weight:normal;color:#262626;transform:scaleX(1.0000)">23</div>
<div class="t" style="left:74.71px;top:542.15px;font-size:14px;line-height:14px;font-weight:normal;color:#262626;transform:scaleX(1.0000)">25</div>
<div class="t" style="left:74.71px;top:560.15px;font-size:14px;line-height:14px;font-weight:normal;color:#262626;transform:scaleX(1.0000)">26</div>
<div class="t" style="left:74.71px;top:578.15px;font-size:14px;line-height:14px;font-weight:normal;color:#262626;transform:scaleX(1.0000)">27</div>
<div class="t" style="left:74.71px;top:596.15px;font-size:14px;line-height:14px;font-weight:normal;color:#262626;transform:scaleX(1.0000)">28</div>
<div class="t" style="left:74.71px;top:614.15px;font-size:14px;line-height:14px;font-weight:normal;color:#262626;transform:scaleX(1.0000)">29</div>
<div class="t" style="left:74.71px;top:634.65px;font-size:14px;line-height:14px;font-weight:normal;color:#262626;transform:scaleX(1.0000)">30</div>
<div class="t" style="left:74.71px;top:656.65px;font-size:14px;line-height:14px;font-weight:normal;color:#262626;transform:scaleX(1.0000)">31</div>
<div class="t" style="left:74.71px;top:678.65px;font-size:14px;line-height:14px;font-weight:normal;color:#262626;transform:scaleX(1.0000)">32</div>
<div class="t" style="left:74.71px;top:700.15px;font-size:14px;line-height:14px;font-weight:normal;color:#262626;transform:scaleX(1.0000)">33</div>
<div class="t" style="left:114.30px;top:723.70px;font-size:13px;line-height:13px;font-weight:normal;color:#fff2cc;transform:scaleX(0.9697)">SaaS - Detailed</div>
<div class="t" style="left:230.30px;top:723.70px;font-size:13px;line-height:13px;font-weight:normal;color:#1a1a1a;transform:scaleX(0.9519)">SaaS - Simple</div>
<div class="t" style="left:338.50px;top:723.50px;font-size:13px;line-height:13px;font-weight:normal;color:#ffffff;transform:scaleX(0.9958)">Ecom - Detailed</div>
<div class="t" style="left:458.30px;top:723.50px;font-size:13px;line-height:13px;font-weight:bold;color:#217346;transform:scaleX(0.9813)">Ecom - Simple</div>
<div class="t" style="left:567.30px;top:691.84px;font-size:12px;line-height:12px;font-weight:normal;color:#444444;transform:scaleX(0.9732)">Plot Area</div>
<div class="t" style="left:11.20px;top:749.84px;font-size:12px;line-height:12px;font-weight:normal;color:#262626;transform:scaleX(0.8822)">Ready</div>
<div class="t" style="left:80.90px;top:749.84px;font-size:12px;line-height:12px;font-weight:bold;color:#262626;transform:scaleX(0.8703)">Accessibility: Investigate</div>
<div class="t" style="left:1331.50px;top:749.84px;font-size:12px;line-height:12px;font-weight:normal;color:#444444;transform:scaleX(0.8631)">100%</div>
</body></html>
